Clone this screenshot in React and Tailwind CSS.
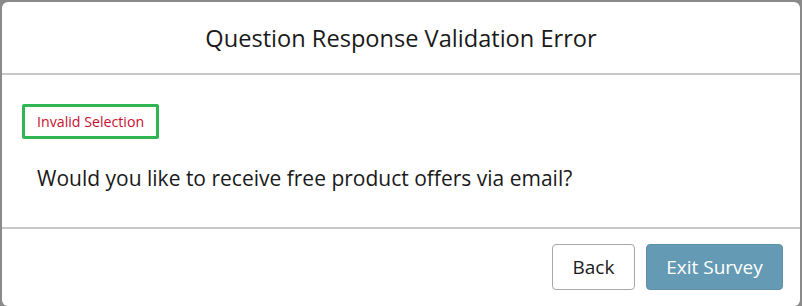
export default function App() {
  return (
    <div
      className="w-[802px] h-[306px] bg-[#8a8a8a] pl-[2px] pt-[2px] overflow-hidden"
      style={{ fontFamily: '"Open Sans", "Noto Sans", sans-serif' }}
    >
      <div className="w-[798px] h-[304px] bg-white rounded-[6px] flex flex-col">
        <div className="h-[73px] pt-[2px] border-b-2 border-[#c8c8c8] flex items-center justify-center">
          <h2 className="text-[23.6px] text-[#1a1a1a]">Question Response Validation Error</h2>
        </div>

        <div className="h-[154px] pl-[20px] pt-[29px] border-b-2 border-[#c8c8c8]">
          <div className="inline-flex items-center h-[35px] px-[12px] border-[3px] border-[#2fb552] rounded-[2px]">
            <span className="text-[14.2px] text-[#c8102e]">Invalid Selection</span>
          </div>
          <p className="mt-[24px] pl-[15px] text-[21px] text-[#1a1a1a]">
            Would you like to receive free product offers via email?
          </p>
        </div>

        <div className="flex-1 flex justify-end items-start pt-[15px] pr-[17px] gap-[11px]">
          <button
            type="button"
            className="h-[46px] w-[83px] bg-white border border-[#a8a8a8] rounded-[4px] text-[19px] text-[#1a1a1a]"
          >
            Back
          </button>
          <button
            type="button"
            className="h-[46px] w-[137px] bg-[#649ab4] border border-[#5b91ab] rounded-[4px] text-[19px] text-white"
          >
            Exit Survey
          </button>
        </div>
      </div>
    </div>
  );
}
